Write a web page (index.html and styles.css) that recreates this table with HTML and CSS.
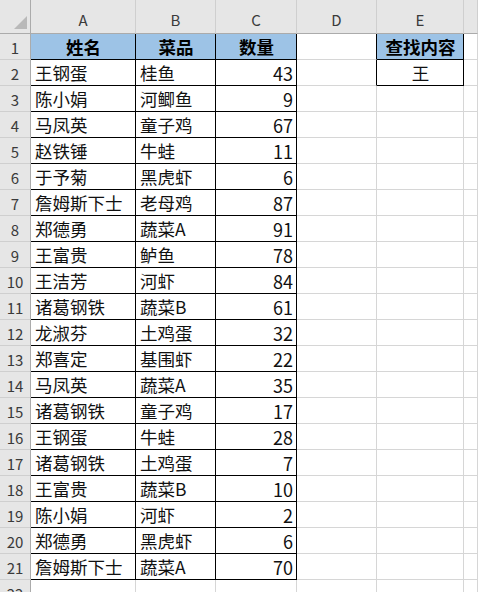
FILE: index.html
```html
<!DOCTYPE html>
<html lang="zh">
<head>
<meta charset="utf-8">
<link rel="stylesheet" href="styles.css">
</head>
<body>
<div class="sheet">
  <div class="corner"><span class="tri"></span></div>
  <div class="ch">A</div><div class="ch">B</div><div class="ch">C</div><div class="ch">D</div><div class="ch">E</div><div class="ch last"></div>

  <div class="rh">1</div><div class="c t hd">姓名</div><div class="c t hd">菜品</div><div class="c t hd">数量</div><div class="c rb"></div><div class="c t hd">查找内容</div><div class="c"></div>
  <div class="rh">2</div><div class="c t">王钢蛋</div><div class="c t">桂鱼</div><div class="c t n">43</div><div class="c rb"></div><div class="c t ctr">王</div><div class="c"></div>
  <div class="rh">3</div><div class="c t">陈小娟</div><div class="c t">河鲫鱼</div><div class="c t n">9</div><div class="c"></div><div class="c"></div><div class="c"></div>
  <div class="rh">4</div><div class="c t">马凤英</div><div class="c t">童子鸡</div><div class="c t n">67</div><div class="c"></div><div class="c"></div><div class="c"></div>
  <div class="rh">5</div><div class="c t">赵铁锤</div><div class="c t">牛蛙</div><div class="c t n">11</div><div class="c"></div><div class="c"></div><div class="c"></div>
  <div class="rh">6</div><div class="c t">于予菊</div><div class="c t">黑虎虾</div><div class="c t n">6</div><div class="c"></div><div class="c"></div><div class="c"></div>
  <div class="rh">7</div><div class="c t">詹姆斯下士</div><div class="c t">老母鸡</div><div class="c t n">87</div><div class="c"></div><div class="c"></div><div class="c"></div>
  <div class="rh">8</div><div class="c t">郑德勇</div><div class="c t">蔬菜A</div><div class="c t n">91</div><div class="c"></div><div class="c"></div><div class="c"></div>
  <div class="rh">9</div><div class="c t">王富贵</div><div class="c t">鲈鱼</div><div class="c t n">78</div><div class="c"></div><div class="c"></div><div class="c"></div>
  <div class="rh">10</div><div class="c t">王洁芳</div><div class="c t">河虾</div><div class="c t n">84</div><div class="c"></div><div class="c"></div><div class="c"></div>
  <div class="rh">11</div><div class="c t">诸葛钢铁</div><div class="c t">蔬菜B</div><div class="c t n">61</div><div class="c"></div><div class="c"></div><div class="c"></div>
  <div class="rh">12</div><div class="c t">龙淑芬</div><div class="c t">土鸡蛋</div><div class="c t n">32</div><div class="c"></div><div class="c"></div><div class="c"></div>
  <div class="rh">13</div><div class="c t">郑喜定</div><div class="c t">基围虾</div><div class="c t n">22</div><div class="c"></div><div class="c"></div><div class="c"></div>
  <div class="rh">14</div><div class="c t">马凤英</div><div class="c t">蔬菜A</div><div class="c t n">35</div><div class="c"></div><div class="c"></div><div class="c"></div>
  <div class="rh">15</div><div class="c t">诸葛钢铁</div><div class="c t">童子鸡</div><div class="c t n">17</div><div class="c"></div><div class="c"></div><div class="c"></div>
  <div class="rh">16</div><div class="c t">王钢蛋</div><div class="c t">牛蛙</div><div class="c t n">28</div><div class="c"></div><div class="c"></div><div class="c"></div>
  <div class="rh">17</div><div class="c t">诸葛钢铁</div><div class="c t">土鸡蛋</div><div class="c t n">7</div><div class="c"></div><div class="c"></div><div class="c"></div>
  <div class="rh">18</div><div class="c t">王富贵</div><div class="c t">蔬菜B</div><div class="c t n">10</div><div class="c"></div><div class="c"></div><div class="c"></div>
  <div class="rh">19</div><div class="c t">陈小娟</div><div class="c t">河虾</div><div class="c t n">2</div><div class="c"></div><div class="c"></div><div class="c"></div>
  <div class="rh">20</div><div class="c t">郑德勇</div><div class="c t">黑虎虾</div><div class="c t n">6</div><div class="c"></div><div class="c"></div><div class="c"></div>
  <div class="rh">21</div><div class="c t">詹姆斯下士</div><div class="c t">蔬菜A</div><div class="c t n">70</div><div class="c"></div><div class="c"></div><div class="c"></div>
  <div class="rh">22</div><div class="c"></div><div class="c"></div><div class="c"></div><div class="c"></div><div class="c"></div><div class="c"></div>
</div>
</body>
</html>
```
FILE: styles.css
```css
html, body {
  margin: 0;
  padding: 0;
  background: #ffffff;
  overflow: hidden;
}
.sheet {
  display: grid;
  grid-template-columns: 31px 105px 80px 81px 80px 87px 14px;
  grid-template-rows: 34px repeat(22, 26px);
  width: 478px;
  font-family: "Noto Sans CJK SC", "Microsoft YaHei", sans-serif;
  color: #111;
}
.corner {
  background: #e6e6e6;
  border-right: 1px solid #ababab;
  border-bottom: 1px solid #ababab;
  box-sizing: border-box;
  position: relative;
}
.tri {
  position: absolute;
  right: 3px;
  bottom: 4px;
  width: 0;
  height: 0;
  border-left: 13px solid transparent;
  border-bottom: 13px solid #b9b9b9;
}
.ch {
  background: #e6e6e6;
  border-right: 1px solid #cfcfcf;
  border-bottom: 1px solid #ababab;
  box-sizing: border-box;
  display: flex;
  align-items: flex-end;
  justify-content: center;
  padding-bottom: 3px;
  font-size: 15px;
  line-height: 20px;
  color: #3a3a3a;
}
.rh {
  background: #e6e6e6;
  border-right: 1px solid #ababab;
  border-bottom: 1px solid #cfcfcf;
  box-sizing: border-box;
  display: flex;
  align-items: center;
  justify-content: center;
  font-size: 15px;
  color: #3a3a3a;
  padding-top: 1px;
}
.c {
  border-right: 1px solid #d6d6d6;
  border-bottom: 1px solid #d6d6d6;
  box-sizing: border-box;
  display: flex;
  align-items: center;
  padding: 0 3px 0 4px;
  font-size: 17.5px;
  line-height: 22px;
  white-space: nowrap;
  overflow: hidden;
}
.t {
  border-right-color: #000;
  border-bottom-color: #000;
}
.rb {
  border-right-color: #000;
}
.hd {
  background: #9dc3e6;
  font-weight: bold;
  justify-content: center;
  color: #000;
}
.n {
  justify-content: flex-end;
  font-size: 18px;
}
.ctr {
  justify-content: center;
}
```
